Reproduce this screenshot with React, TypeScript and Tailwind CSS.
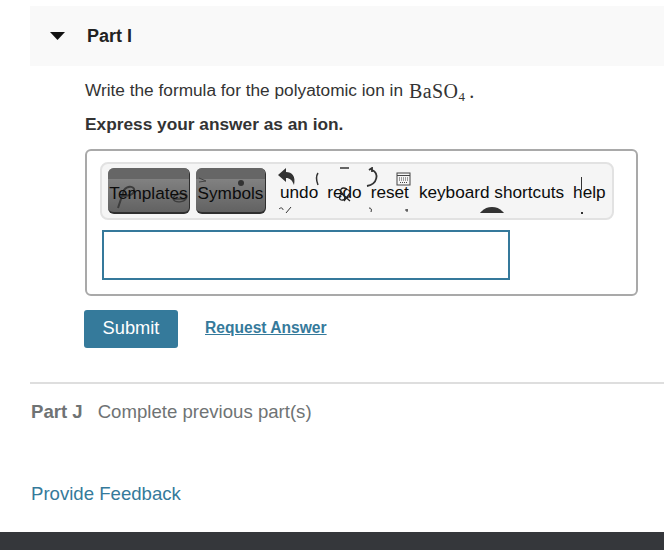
const sans = "font-['Liberation_Sans',Arial,sans-serif]";

function ToolLabel({ children, className = "" }: { children: string; className?: string }) {
  return <span className={`text-[17.2px] leading-[18px] text-[#0c0c0c] ${className}`}>{children}</span>;
}

function Toolbar() {
  return (
    <div className="relative flex h-[58px] w-[514px] items-center overflow-hidden rounded-[8px] border-2 border-[#e2e2e2] bg-[#f5f5f5] pl-[6px]">
      <div className="relative flex h-[46px] w-[82px] items-center justify-center overflow-hidden rounded-[6px] border-b-[2px] border-r-[1px] border-[#2e2e2e] bg-gradient-to-b from-[#8c8c8c] to-[#626262]">
        <div className="absolute left-0 right-0 top-0 h-[11px] bg-[#666]" />
        <svg className="absolute left-0 top-0" width="82" height="46" viewBox="0 0 82 46" fill="none" stroke="#3c3c3c" strokeWidth="2">
          <path d="M10 40 L16 22 C20 17 28 18 26 24 C24 28 18 28 14 28" />
          <path d="M65 31 C66 25 78 24 79 28 C79 34 68 36 65 31 M65 31 H78" strokeWidth="1.4" />
        </svg>
        <ToolLabel className="relative pt-[5px]">Templates</ToolLabel>
      </div>
      <div className="relative ml-[6px] flex h-[46px] w-[70px] items-center justify-center overflow-hidden rounded-[6px] border-b-[2px] border-r-[1px] border-[#2e2e2e] bg-gradient-to-b from-[#8c8c8c] to-[#626262]">
        <div className="absolute left-0 right-0 top-0 h-[11px] bg-[#666]" />
        <div className="absolute left-[42px] top-[12px] h-[6px] w-[6px] rounded-full bg-[#333]" />
        <svg className="absolute left-[2px] top-[9px]" width="10" height="6" viewBox="0 0 10 6" fill="none" stroke="#444" strokeWidth="1">
          <path d="M1 1 L8 4 L1 5" />
        </svg>
        <ToolLabel className="relative pt-[5px]">Symbols</ToolLabel>
      </div>
      <ToolLabel className="ml-[14px] pt-[2px]">undo</ToolLabel>
      <ToolLabel className="ml-[9px] pt-[2px]">redo</ToolLabel>
      <ToolLabel className="ml-[9px] pt-[2px]">reset</ToolLabel>
      <ToolLabel className="ml-[10px] pt-[2px]">keyboard shortcuts</ToolLabel>
      <ToolLabel className="ml-[9px] pt-[2px]">help</ToolLabel>

      {/* clipped sprite fragments of the toolbar icons */}
      <svg className="absolute left-[175px] top-[2px]" width="24" height="22" viewBox="0 0 24 22" fill="#333">
        <path d="M1 9 L9 2 V6 C15 6 19 10 17 19 C15 14 13 12 9 12 V16 Z" />
      </svg>
      <svg className="absolute left-[209px] top-[3px]" width="60" height="20" viewBox="0 0 60 20" fill="none" stroke="#333" strokeWidth="1.5">
        <path d="M7 6 C5 9 5 13 7 18" />
        <path d="M29 1 H38" />
      </svg>
      <svg className="absolute left-[262px] top-[3px]" width="18" height="22" viewBox="0 0 18 22" fill="none" stroke="#333" strokeWidth="1.8">
        <path d="M8 3 C15 6 14 17 3 19" />
        <path d="M5 3 L8 1 L8 5" />
      </svg>
      <svg className="absolute left-[294px] top-[8px]" width="15" height="15" viewBox="0 0 15 15" fill="none" stroke="#444" strokeWidth="1">
        <rect x="1" y="1" width="13" height="12" fill="#f5f5f5" />
        <path d="M1 3.5 H14" />
        <path d="M3 6 H12 M3 8 H12 M4 10.5 H11" strokeDasharray="1 1" />
      </svg>
      <svg className="absolute left-[231px] top-[4px]" width="20" height="34" viewBox="0 0 20 34" fill="none" stroke="#222" strokeWidth="1.3">
        <path d="M14 21 C8 18 6 23 9 25 C12 28 13 31 10 32 C6 33 5 28 9 26 L17 33 M17 25 L11 33" />
      </svg>
      <div className="absolute bottom-[5px] left-[176px] h-[6px] w-[300px] overflow-hidden">
        <svg className="absolute bottom-0 left-0" width="14" height="6" viewBox="0 0 14 6" fill="none" stroke="#333" strokeWidth="1">
          <path d="M1 2 C3 0 5 1 5 3 M13 0 L8 6" />
        </svg>
        <svg className="absolute bottom-0 left-[90px]" width="40" height="6" viewBox="0 0 40 6" fill="none" stroke="#333" strokeWidth="1">
          <path d="M1 1 C3 1 4 2 3 5" />
          <path d="M39 2 V5 M37 3 H40" />
        </svg>
      </div>
      <div className="absolute bottom-[5px] left-[375px] h-[6px] w-[30px] overflow-hidden">
        <div className="h-[30px] w-[30px] rounded-full bg-[#333]" />
      </div>
      <div className="absolute left-[479px] top-[13px] h-[13px] w-[1px] bg-[#333]" />
      <div className="absolute bottom-[4px] left-[479px] h-[2px] w-[2px] bg-[#333]" />
    </div>
  );
}

export default function App() {
  return (
    <div className={`${sans} flex h-[550px] w-[664px] flex-col overflow-hidden bg-white text-[#333]`}>
      <div className="ml-[30px] mt-[6px] flex h-[60px] items-center bg-[#f9f9f9]">
        <svg className="ml-[20px]" width="15" height="8" viewBox="0 0 15 8" fill="#111">
          <path d="M0 0 H15 L7.5 8 Z" />
        </svg>
        <span className="ml-[22px] text-[18px] font-bold text-[#222]">Part I</span>
      </div>

      <div className="ml-[85px] mt-[13px] flex h-[24px] items-center text-[17.25px]">
        Write the formula for the polyatomic ion in
        <span className="ml-[6px] font-['Liberation_Serif',serif] text-[20px] tracking-[0.4px]">
          BaSO<sub className="relative top-[3px] align-baseline text-[13px]">4</sub>
        </span>
        <span className="ml-[4px] font-['Liberation_Serif',serif] text-[20px]">.</span>
      </div>
      <div className="ml-[85px] mt-[9px] h-[24px] text-[17.3px] font-bold leading-[24px]">Express your answer as an ion.</div>

      <div className="ml-[85px] mt-[13px] h-[147px] w-[553px] rounded-[6px] border-2 border-[#a9a9a9] pl-[13px] pt-[11px]">
        <Toolbar />
        <div className="ml-[2px] mt-[10px] h-[50px] w-[408px] border-2 border-[#35799b] bg-white" />
      </div>

      <div className="ml-[84px] mt-[14px] flex h-[38px] items-center">
        <button className="h-[38px] w-[94px] rounded-[3px] bg-[#357a9b] pb-[2px] text-[18.3px] font-normal text-white">Submit</button>
        <a className="ml-[27px] mb-[2px] text-[15.6px] font-bold text-[#357a9b] underline">Request Answer</a>
      </div>

      <div className="ml-[30px] mt-[34px] border-t-2 border-[#dedede] pl-[1px] pt-[17px] text-[18.6px] leading-[22px] text-[#6f7374]">
        <span className="font-bold">Part J</span>
        <span className="ml-[15px]">Complete previous part(s)</span>
      </div>

      <a className="ml-[31px] mt-[59px] text-[18.6px] leading-[24px] text-[#357a9b]">Provide Feedback</a>

      <div className="mt-auto h-[18px] bg-[#35373b]" />
    </div>
  );
}
